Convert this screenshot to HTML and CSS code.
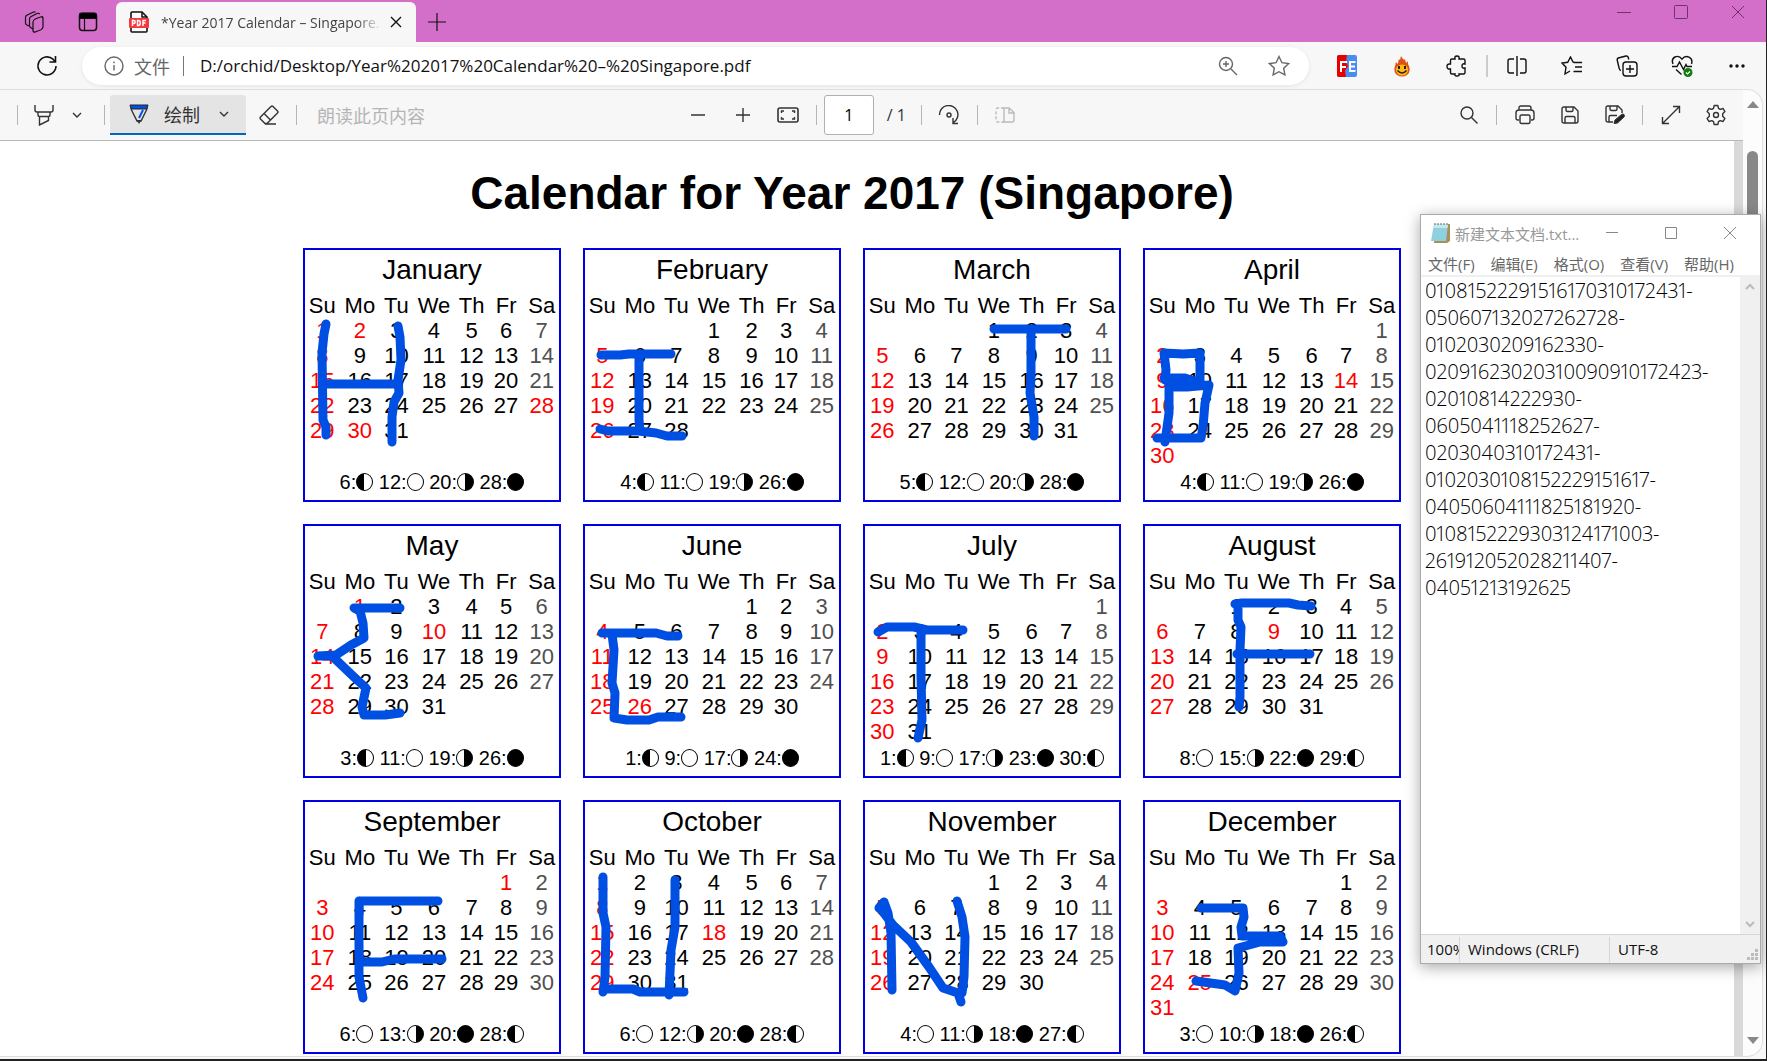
FILE: index.html
```html
<!DOCTYPE html>
<html lang="zh-CN">
<head>
  <meta charset="UTF-8">
  <meta name="viewport" content="width=device-width, initial-scale=1.0">
  <title>Year 2017 Calendar – Singapore</title>
  <link rel="stylesheet" href="styles.css">
</head>
<body>
  <header class="tab-strip">
    <button class="strip-btn" aria-label="Workspaces">
      <svg width="22" height="22" viewBox="0 0 22 22"><rect x="9" y="7" width="10" height="13" rx="2.500" transform="skewY(-20) translate(0 5)"/><path d="M9 18l-2.500-1.500q-1-.7-1-2V8q0-1.500 1.300-2.300L13 2.500q1.500-.7 3 .5M5 15l-2-1q-1.500-.8-1.500-2.300V6.500Q1.500 5 2.800 4.300L9 1.200q1.200-.6 2.500 0"/></svg>
    </button>
    <button class="strip-btn" aria-label="Tab actions">
      <svg width="20" height="20" viewBox="0 0 20 20"><rect x="1.500" y="1.500" width="17" height="17" rx="3" stroke-width="1.500"/><path d="M1.500 3q0-2 2-2h13q2 0 2 2v3.500h-17z" fill="#000"/><path d="M6.500 6v12"/></svg>
    </button>
    <div class="tab">
      <svg class="pdf-icon" width="20" height="22" viewBox="0 0 20 22"><path d="M2 9V2q0-1 1-1h10l5 5v3M2 17v3q0 1 1 1h14q1 0 1-1v-3" fill="#fff" stroke="#111" stroke-width="1.600"/><path d="M13 1v5h5" fill="none" stroke="#111" stroke-width="1.500"/><rect y="7" width="20" height="10" rx="1" fill="#f5393d" stroke="none"/><path d="M3.500 15V9.500h1.300q1.400 0 1.400 1.500t-1.400 1.500H3.500M8.500 9.500v5h.8q2 0 2-2.500t-2-2.500zM14 15V9.500h3M14 12h2.500" fill="none" stroke="#fff" stroke-width="1.400"/></svg>
      <span class="tab-title">*Year 2017 Calendar – Singapore.</span>
      <button class="tab-close" aria-label="Close tab"><svg width="12" height="12" viewBox="0 0 12 12"><path d="M1 1l10 10M11 1L1 11"/></svg></button>
    </div>
    <button class="new-tab" aria-label="New tab"><svg width="18" height="18" viewBox="0 0 18 18"><path d="M9 0v18M0 9h18"/></svg></button>
    <div class="window-controls">
      <button aria-label="Minimize"><svg width="14" height="14" viewBox="0 0 14 14"><path d="M0 7.500h14"/></svg></button>
      <button aria-label="Maximize"><svg width="14" height="14" viewBox="0 0 14 14"><rect x=".5" y=".5" width="13" height="13" rx="1"/></svg></button>
      <button aria-label="Close"><svg width="14" height="14" viewBox="0 0 14 14"><path d="M1 1l12 12M13 1L1 13"/></svg></button>
    </div>
  </header>

  <nav class="nav-bar">
    <button class="refresh" aria-label="Refresh"><svg width="22" height="22" viewBox="0 0 22 22"><path d="M20 11a9 9 0 1 1-3-6.800L19 6.500M19.500 1v6h-6" stroke-width="1.600"/></svg></button>
    <div class="address">
      <svg width="20" height="20" viewBox="0 0 20 20"><circle cx="10" cy="10" r="9"/><path d="M10 9v5.500M10 5.500v1.700"/></svg>
      <label class="scheme" for="url">文件</label>
      <span class="bar"></span>
      <input id="url" type="text" value="D:/orchid/Desktop/Year%202017%20Calendar%20–%20Singapore.pdf">
      <button aria-label="Zoom"><svg width="20" height="20" viewBox="0 0 20 20"><circle cx="8" cy="8" r="6.500"/><path d="M13 13l6 6M8 5v6M5 8h6"/></svg></button>
      <button aria-label="Add to favorites"><svg width="22" height="22" viewBox="0 0 22 22"><path d="M11 1.500l2.900 6.200 6.700.8-4.900 4.700 1.200 6.700-5.900-3.200-5.900 3.200 1.200-6.700L1.400 8.500l6.700-.8z"/></svg></button>
    </div>
    <div class="extensions">
      <button aria-label="FE Helper"><svg width="20" height="22" viewBox="0 0 20 22"><rect width="20" height="22" rx="2" fill="#4a8df0" stroke="none"/><path d="M2 0h8l-1 7 2 4-3 5 1 6H2q-2 0-2-2V2q0-2 2-2z" fill="#e80000" stroke="none"/><path d="M4 17V7h6M4 12h5M18.500 7H13v9h5.500M13 11.500h5" stroke="#fff" stroke-width="2"/></svg></button>
      <button aria-label="Fire"><svg width="18" height="22" viewBox="0 0 18 22"><path d="M8 1q1 2 3 4l1-1 1 4 2-2q-.5 3 1 5 2 6-2 9-5 3-10 0-4-3-2-9 1-2 .5-4L5 9q0-3 1-5l1 1z" fill="#df5018" stroke="none"/><ellipse cx="9" cy="15" rx="6" ry="5.500" fill="#fdb913" stroke="none"/><path d="M6 11v3M12 11v3" stroke="#222" stroke-width="2"/><path d="M4.500 15.500q4.500 5 9 0" stroke="#222" stroke-width="1.500"/></svg></button>
      <button aria-label="Extensions"><svg width="22" height="22" viewBox="0 0 22 22"><path d="M6 4h3q-.8-3 2-3t2 3h4.500Q19 4 19 5.500V9q-3-.8-3 2t3 2v4.500q0 1.500-1.500 1.500H13q.8 2-2 2t-2-2H6q-1.500 0-1.500-1.500V14Q1 14.500 1 11.500T4.500 9V5.500Q4.500 4 6 4z"/></svg></button>
      <span class="nav-divider"></span>
      <button aria-label="Split screen"><svg width="22" height="20" viewBox="0 0 22 20"><path d="M8 3H4Q2 3 2 5v10q0 2 2 2h4M14 3h4q2 0 2 2v10q0 2-2 2h-4M11 0v20"/></svg></button>
      <button aria-label="Favorites"><svg width="22" height="20" viewBox="0 0 22 20"><path d="M13 6.500L12 6 9.500 1 6.700 6.300 1 7l4 4.200L4 18l5-3M13 6.500h8M14 11h7M12.500 15.500H21"/></svg></button>
      <button aria-label="Collections"><svg width="22" height="22" viewBox="0 0 22 22"><path d="M5 15.500q-1.500-.3-1.800-2L1.200 5Q1 3.500 2.300 3L10 1q1.700-.3 2.200 1.300l.6 2.200"/><rect x="7" y="7" width="14" height="14" rx="3"/><path d="M14 10v8M10 14h8"/></svg></button>
      <button aria-label="Browser essentials"><svg width="22" height="22" viewBox="0 0 22 22"><path d="M2 9Q0 4 4 2t7 2.200Q14 .2 18 2.200T20.500 9M1 11.500h5L8.500 7l4 7.500 2.500-5 1 2h5M5 14.500l5.500 5"/><circle cx="17" cy="17.500" r="4.500" fill="#107c10" stroke="none"/><path d="M15 17.500l1.500 1.500 2.500-2.500" stroke="#fff" stroke-width="1.200"/></svg></button>
      <button aria-label="More"><svg width="20" height="4" viewBox="0 0 20 4"><g fill="#111" stroke="none"><circle cx="4" cy="2" r="1.700"/><circle cx="10" cy="2" r="1.700"/><circle cx="16" cy="2" r="1.700"/></g></svg></button>
    </div>
  </nav>

  <main class="viewer">
    <div class="document">
      <div class="toolbar">
        <div class="tools-left">
          <span class="divider"></span>
          <button class="tool" aria-label="Highlight"><svg width="20" height="22" viewBox="0 0 20 22"><path d="M1 1v5q0 2 2 2h14q2 0 2-2V1M4 8v3q0 1.500 1.500 1.500h9Q16 12.500 16 11V8M5.500 12.500V21l9-4.500v-4"/></svg></button>
          <button class="caret" aria-label="Highlight colors"><svg width="10" height="6" viewBox="0 0 10 6"><path d="M1 1l4 4 4-4"/></svg></button>
          <span class="divider draw-divider"></span>
          <button class="draw"><svg width="20" height="20" viewBox="0 0 20 20"><path d="M1 1h18l-1 4H2z" fill="#0050e6" stroke="#222" stroke-width="1"/><path d="M2 5l6 12h4l6-12"/><path d="M7.500 16h5L10 20z" fill="#333" stroke="none"/><path d="M14 6l-4 8" stroke="#0050e6" stroke-width="2"/></svg><span>绘制</span><svg width="10" height="6" viewBox="0 0 10 6"><path d="M1 1l4 4 4-4"/></svg></button>
          <button class="tool" aria-label="Erase"><svg width="20" height="20" viewBox="0 0 20 20"><path d="M1.500 12L12 1.500q1-1 2 0l4.500 4.500q1 1 0 2L8 18.500H6l-4.500-4.500q-1-1 0-2zM5 8.500l6.500 6.500M6 19h11"/></svg></button>
          <span class="divider"></span>
          <button class="read-aloud" disabled>朗读此页内容</button>
        </div>
        <div class="tools-center">
          <button class="tool" aria-label="Zoom out"><svg width="14" height="14" viewBox="0 0 14 14"><path d="M0 7h14"/></svg></button>
          <button class="tool" aria-label="Zoom in"><svg width="14" height="14" viewBox="0 0 14 14"><path d="M0 7h14M7 0v14"/></svg></button>
          <button class="tool" aria-label="Fit to page"><svg width="22" height="16" viewBox="0 0 22 16"><rect x="1" y="1" width="20" height="14" rx="2" stroke-width="1.600"/><path d="M4.500 6V4H7M15 4h2.500v2M17.500 10v2H15M7 12H4.500v-2"/></svg></button>
          <span class="divider"></span>
          <input class="page-number" type="text" value="1" aria-label="Page number">
          <span class="page-count">/ 1</span>
          <span class="divider"></span>
          <button class="tool" aria-label="Rotate"><svg width="22" height="20" viewBox="0 0 22 20"><path d="M1.500 10a9.200 9.200 0 1 1 14 7.500M15 13v5.500h5"/><circle cx="11" cy="10" r="2"/></svg></button>
          <span class="divider"></span>
          <button class="tool faded" aria-label="Page view"><svg width="20" height="16" viewBox="0 0 20 16"><path d="M9 1h5l5 4.500V13q0 2-2 2H9zM14 1v5h5"/><path d="M9 1H3Q1 1 1 3v10q0 2 2 2h6" stroke-dasharray="3 2"/></svg></button>
        </div>
        <div class="tools-right">
          <button class="tool" aria-label="Find"><svg width="18" height="18" viewBox="0 0 18 18"><circle cx="7" cy="7" r="6"/><path d="M11.500 11.500L17.500 17.500"/></svg></button>
          <span class="divider"></span>
          <button class="tool" aria-label="Print"><svg width="20" height="20" viewBox="0 0 20 20"><path d="M4 5V3q0-2 2-2h8q2 0 2 2v2M4 15H3q-2 0-2-2V8q0-3 3-3h12q3 0 3 3v5q0 2-2 2h-1"/><rect x="5" y="10" width="10" height="8.500" rx="1.500"/></svg></button>
          <button class="tool" aria-label="Save"><svg width="18" height="18" viewBox="0 0 18 18"><path d="M3 1h10l4 4v10q0 2-2 2H3q-2 0-2-2V3q0-2 2-2zM5 1v3q0 1.500 1.500 1.500h4Q12 5.500 12 4V1M4 17v-5q0-1.500 1.500-1.500h7Q14 10.500 14 12v5"/></svg></button>
          <button class="tool" aria-label="Save as"><svg width="20" height="20" viewBox="0 0 20 20"><path d="M8 17H3q-2 0-2-2V3q0-2 2-2h10l4 4v3M5 1v3q0 1.500 1.500 1.500h4Q12 5.500 12 4V1M4 17v-5q0-1.500 1.500-1.500H12"/><path d="M9 18.500l1-3.500 6.500-5.500q1.500-1 2.500 0t0 2.500L12.500 18z" fill="#222" stroke-width="1"/></svg></button>
          <span class="divider"></span>
          <button class="tool" aria-label="Full screen"><svg width="20" height="20" viewBox="0 0 20 20"><path d="M12 1.500h6.500V8M18.500 1.500l-17 17M1.500 12v6.500H8"/></svg></button>
          <button class="tool" aria-label="Settings"><svg width="22" height="22" viewBox="0 0 22 22"><path d="M9.200 1.500h3.600l.7 2.900 1.700 1 2.900-.9 1.800 3.100-2.200 2.100v2.600l2.200 2.100-1.800 3.100-2.900-.9-1.700 1-.7 2.900H9.200l-.7-2.900-1.700-1-2.900.9-1.800-3.100 2.200-2.100V9.700L2.100 7.600l1.800-3.100 2.900.9 1.700-1z" stroke-linejoin="round"/><circle cx="11" cy="11" r="2.500"/></svg></button>
        </div>
      </div>

      <section class="page">
        <h1>Calendar for Year 2017 (Singapore)</h1>
        <div class="year">
          <div class="months" id="months"></div>
          <!-- pen strokes drawn over the months -->
          <svg class="ink" viewBox="0 0 1098 806">
            <path d="M23 76L21 86 19 105 20 172 23 179V187M95 78L97 89 98 112 95 132 96 145 91 154 89 169V194M22 136H95"/>
            <path d="M298 107H317L326 106H368M336 108V172L337 183M297 181L305 183H335L353 185 364 188H379"/>
            <path d="M691 81H763M728 82V125L727 145 731 169V188"/>
            <path d="M862 132L863 122 861 105 880 106 897 105V134M861 130H882L897 135M868 139H884L906 137 902 155 900 179 898 190H854M866 134V165L862 194"/>
            <path d="M97 360H51L57 363 60 375 61 390 48 397 33 407 15 408H29L51 429 63 440 59 459 61 467H82L97 465"/>
            <path d="M299 385H353L364 388H375M309 386L311 402 309 435 312 445 311 470 324 472H346L355 469H378"/>
            <path d="M575 384L584 379H611L624 382H660M618 384V429L619 472 615 490"/>
            <path d="M932 356L939 355H986L995 357 1008 358M935 357V372L938 379 937 402V449L936 459M934 406H1007"/>
            <path d="M57 653H135M56 653V729L60 750M59 714H79L91 711H139"/>
            <path d="M300 629V665L303 679 302 729 300 744M302 741H330L337 744H381M372 632V679L368 702 366 747"/>
            <path d="M576 660L581 654 585 665 588 685 589 742M577 660L590 677 608 694 626 719 640 740 655 745 658 754M654 653L659 669 662 689 661 729 659 745"/>
            <path d="M898 660H940L941 669 938 679 939 688H977L980 694H957L935 700 936 725 932 743 922 737 893 733"/>
          </svg>
        </div>
      </section>
    </div>
    <div class="scrollbar">
      <svg width="12" height="7" viewBox="0 0 12 7"><path d="M0 7l6-7 6 7z"/></svg>
      <div class="track"><div class="thumb"></div></div>
      <svg width="12" height="7" viewBox="0 0 12 7"><path d="M0 0l6 7 6-7z"/></svg>
    </div>
  </main>

  <section class="notepad">
    <div class="notepad-title">
      <svg width="22" height="22" viewBox="0 0 22 22"><path d="M5 2h15v17l-3 2H4z" fill="#a98f5a"/><path d="M4 2h14l-2 17H1z" fill="#8fd0de"/><path d="M4 2h14l-.5 4h-14z" fill="#c5e8ef"/><path d="M5 1v2M8 1v2M11 1v2M14 1v2M17 1v2" stroke="#666"/></svg>
      <span>新建文本文档.txt...</span>
      <button aria-label="Minimize"><svg width="12" height="12" viewBox="0 0 12 12"><path d="M0 5.500h12"/></svg></button>
      <button aria-label="Maximize"><svg width="12" height="12" viewBox="0 0 12 12"><path d="M.5.5h11v11H.5z"/></svg></button>
      <button aria-label="Close"><svg width="12" height="12" viewBox="0 0 12 12"><path d="M0 0l12 12M12 0L0 12"/></svg></button>
    </div>
    <div class="notepad-menu">
      <button>文件(F)</button>
      <button>编辑(E)</button>
      <button>格式(O)</button>
      <button>查看(V)</button>
      <button>帮助(H)</button>
    </div>
    <div class="notepad-body">
      <textarea aria-label="Text" spellcheck="false">01081522291516170310172431-
050607132027262728-
0102030209162330-
02091623020310090910172423-
02010814222930-
0605041118252627-
0203040310172431-
0102030108152229151617-
04050604111825181920-
0108152229303124171003-
261912052028211407-
04051213192625</textarea>
      <div class="notepad-scroll">
        <svg width="10" height="8" viewBox="0 0 10 8"><path d="M1 6l4-4 4 4"/></svg>
        <svg width="10" height="8" viewBox="0 0 10 8"><path d="M1 2l4 4 4-4"/></svg>
      </div>
    </div>
    <div class="notepad-status">
      <span class="zoom">100%</span>
      <span class="eol">Windows (CRLF)</span>
      <span class="encoding">UTF-8</span>
      <svg width="12" height="12" viewBox="0 0 12 12"><path d="M8 0h3v3H8zM4 4h3v3H4zM8 4h3v3H8zM0 8h3v3H0zM4 8h3v3H4zM8 8h3v3H8z"/></svg>
    </div>
  </section>
  <script src="script.js"></script>
</body>
</html>
```
FILE: script.js
```js
const weekdays = ['Su', 'Mo', 'Tu', 'We', 'Th', 'Fr', 'Sa'];

// start: weekday of the 1st, moons: [day, phase]
const months = [
  { name: 'January', start: 0, days: 31, holidays: [2, 28, 30], moons: [[6, 'first'], [12, 'full'], [20, 'last'], [28, 'new']] },
  { name: 'February', start: 3, days: 28, holidays: [], moons: [[4, 'first'], [11, 'full'], [19, 'last'], [26, 'new']] },
  { name: 'March', start: 3, days: 31, holidays: [], moons: [[5, 'first'], [12, 'full'], [20, 'last'], [28, 'new']] },
  { name: 'April', start: 6, days: 30, holidays: [14], moons: [[4, 'first'], [11, 'full'], [19, 'last'], [26, 'new']] },
  { name: 'May', start: 1, days: 31, holidays: [1, 10], moons: [[3, 'first'], [11, 'full'], [19, 'last'], [26, 'new']] },
  { name: 'June', start: 4, days: 30, holidays: [26], moons: [[1, 'first'], [9, 'full'], [17, 'last'], [24, 'new']] },
  { name: 'July', start: 6, days: 31, holidays: [], moons: [[1, 'first'], [9, 'full'], [17, 'last'], [23, 'new'], [30, 'first']] },
  { name: 'August', start: 2, days: 31, holidays: [9], moons: [[8, 'full'], [15, 'last'], [22, 'new'], [29, 'first']] },
  { name: 'September', start: 5, days: 30, holidays: [1], moons: [[6, 'full'], [13, 'last'], [20, 'new'], [28, 'first']] },
  { name: 'October', start: 0, days: 31, holidays: [18], moons: [[6, 'full'], [12, 'last'], [20, 'new'], [28, 'first']] },
  { name: 'November', start: 3, days: 30, holidays: [], moons: [[4, 'full'], [11, 'last'], [18, 'new'], [27, 'first']] },
  { name: 'December', start: 5, days: 31, holidays: [25], moons: [[3, 'full'], [10, 'last'], [18, 'new'], [26, 'first']] }
];

function dayCell(month, week, weekday) {
  const day = week * 7 + weekday - month.start + 1;
  if (day < 1 || day > month.days) return '<td></td>';
  let cls = '';
  if (weekday === 0 || month.holidays.includes(day)) cls = 'holiday';
  else if (weekday === 6) cls = 'saturday';
  return `<td class="${cls}">${day}</td>`;
}

function renderMonth(month) {
  const head = weekdays.map(d => `<th>${d}</th>`).join('');
  let rows = '';
  for (let week = 0; week < 6; week++) {
    rows += '<tr>' + weekdays.map((d, i) => dayCell(month, week, i)).join('') + '</tr>';
  }
  const moons = month.moons
    .map(([day, phase]) => `<span>${day}:<i class="moon ${phase}"></i></span>`)
    .join(' ');
  return `<article class="month">
    <table>
      <caption>${month.name}</caption>
      <thead><tr>${head}</tr></thead>
      <tbody>${rows}</tbody>
    </table>
    <p class="moons">${moons}</p>
  </article>`;
}

document.getElementById('months').innerHTML = months.map(renderMonth).join('');
```
FILE: styles.css
```css
* {
  box-sizing: border-box;
}
body {
  margin: 0;
  height: 100vh;
  display: flex;
  flex-direction: column;
  overflow: hidden;
  background-color: #f7f7f7;
  border-right: 1px solid #222;
  border-bottom: 2px solid #222;
  font-family: "Open Sans", "Noto Sans CJK SC", sans-serif;
  color: #111;
}
button {
  border: none;
  background: none;
  padding: 0;
  margin: 0;
  font: inherit;
  color: inherit;
  display: flex;
  align-items: center;
  justify-content: center;
}
svg {
  fill: none;
  stroke: currentColor;
  stroke-width: 1.4;
  flex-shrink: 0;
}

/* tab strip */
.tab-strip {
  height: 42px;
  flex-shrink: 0;
  display: flex;
  align-items: center;
  padding: 2px 0 0 8px;
  background-color: #d36fc8;
}
.strip-btn {
  width: 53px;
  height: 40px;
}
.strip-btn svg, .new-tab svg {
  stroke-width: 1.2;
}
.tab {
  width: 300px;
  height: 40px;
  margin-left: 2px;
  padding: 0 14px 0 13px;
  display: flex;
  align-items: center;
  background-color: #f7f7f7;
  border-radius: 6px 6px 0 0;
}
.tab-title {
  flex: 1;
  margin: 0 8px 0 12px;
  overflow: hidden;
  white-space: nowrap;
  font-size: 14px;
  color: #444;
  -webkit-mask-image: linear-gradient(to right, #000 88%, transparent);
  mask-image: linear-gradient(to right, #000 88%, transparent);
}
.new-tab {
  width: 42px;
  height: 40px;
}
.window-controls {
  margin: -2px 0 0 auto;
  align-self: flex-start;
  display: flex;
  color: #6e3568;
}
.window-controls button {
  width: 57px;
  height: 24px;
}
.window-controls svg {
  stroke-width: 1;
}

/* address row */
.nav-bar {
  height: 47px;
  flex-shrink: 0;
  display: flex;
  align-items: center;
  padding-right: 2px;
}
.refresh {
  width: 82px;
  padding-left: 12px;
}
.address {
  flex: 1;
  height: 38px;
  margin-right: 10px;
  padding: 0 5px 0 22px;
  display: flex;
  align-items: center;
  background-color: #fff;
  border-radius: 19px;
  box-shadow: 0 1px 4px rgba(0, 0, 0, 0.08);
  color: #666;
}
.scheme {
  margin-left: 10px;
  font-size: 18px;
}
.bar {
  width: 1px;
  height: 20px;
  margin: 0 16px 0 13px;
  background-color: #777;
}
.address input {
  flex: 1;
  border: none;
  padding: 0;
  outline: none;
  background: none;
  font: inherit;
  font-size: 17px;
  color: #111;
}
.address button {
  width: 51px;
}
.extensions {
  display: flex;
  align-items: center;
}
.extensions button {
  width: 55px;
  height: 38px;
}
.nav-divider {
  width: 2px;
  height: 22px;
  margin: 0 1px 0 2px;
  background-color: #ccc;
}

/* pdf viewer */
.viewer {
  flex: 1;
  min-height: 0;
  margin: 0 3px 2px 0;
  display: flex;
  overflow: hidden;
  border: 1px solid #dedede;
  border-left: none;
  border-radius: 0 16px 16px 0;
  background-color: #fcfcfc;
}
.document {
  flex: 1;
  min-width: 0;
  display: flex;
  flex-direction: column;
}
.toolbar {
  height: 51px;
  flex-shrink: 0;
  display: flex;
  align-items: center;
  background-color: #f7f7f7;
  border-bottom: 1px solid #b8b8b8;
  color: #333;
}
.tools-left, .tools-center, .tools-right {
  display: flex;
  align-items: center;
}
.tools-left {
  width: 39%;
  margin-right: -4px;
  padding-left: 12px;
}
.tools-right {
  margin-left: auto;
  padding-right: 5px;
}
.tool {
  width: 45px;
  height: 40px;
}
.tools-left .tool:first-of-type {
  width: 42px;
}
.faded {
  color: #bbb;
}
.divider {
  width: 1px;
  height: 20px;
  margin: 0 5px;
  background-color: #b5b5b5;
}
.caret {
  width: 24px;
  height: 40px;
}
.draw-divider {
  margin-left: 15px;
}
.draw {
  width: 136px;
  height: 40px;
  padding-left: 2px;
  background-color: #e4e4e4;
  border-bottom: 2px solid #0067c0;
  border-radius: 3px 3px 0 0;
}
.draw span {
  margin: 0 19px 0 15px;
}
.draw span, .read-aloud {
  font-size: 18px;
}
.read-aloud {
  margin-left: 15px;
  color: #b5b5b5;
}
.page-number {
  width: 50px;
  height: 40px;
  margin-left: 2px;
  padding: 0;
  border: 1px solid #b0b0b0;
  border-radius: 3px;
  background-color: #fff;
  text-align: center;
  font: inherit;
  font-size: 16px;
}
.page-count {
  margin: 0 10px 0 13px;
  font-size: 16px;
}
.page {
  flex: 1;
  min-height: 0;
  overflow: hidden;
  padding: 26px 30px 0 0;
  background-color: #fff;
  border-right: 9px solid #d9d9d9;
  font-family: "Liberation Sans", Arial, sans-serif;
  color: #000;
}
.page h1 {
  margin: 0 0 29px;
  text-align: center;
  font-size: 46px;
  line-height: 52px;
}
.year {
  position: relative;
  max-width: 1098px;
  margin: 0 auto;
}
.months {
  display: grid;
  grid-template-columns: repeat(4, 1fr);
  gap: 22px;
}
.ink {
  position: absolute;
  top: 0;
  left: 0;
  width: 100%;
  height: 100%;
  stroke: #004fe3;
  stroke-width: 9;
  stroke-linecap: round;
  stroke-linejoin: round;
}
.month {
  border: 2px solid #0000e6;
  padding: 2px 0 5px;
}
.month table {
  width: 100%;
  table-layout: fixed;
  border-collapse: collapse;
  font-size: 22px;
  line-height: 25px;
}
.month caption {
  padding-bottom: 5px;
  font-size: 28px;
  line-height: 36px;
}
.month th, .month td {
  width: 34px;
  height: 25px;
  padding: 0;
  text-align: center;
  font-weight: normal;
}
.month th:nth-child(2) {
  width: 40px;
}
.month th:nth-child(3), .month th:nth-child(5) {
  width: 32px;
}
.month th:nth-child(4) {
  width: 42px;
}
.month th:nth-child(6) {
  width: 36px;
}
.month .holiday {
  color: #f00;
}
.month .saturday {
  color: #505050;
}
.moons {
  height: 25px;
  margin: 2px 0 0;
  text-align: center;
  white-space: nowrap;
  font-size: 20px;
  line-height: 24px;
}
.moon {
  display: inline-block;
  width: 17px;
  height: 18px;
  border: 1px solid #000;
  border-radius: 50%;
  vertical-align: -2px;
}
.moon.first {
  background: linear-gradient(to right, #000 50%, #fff 50%);
}
.moon.last {
  background: linear-gradient(to right, #fff 50%, #000 50%);
}
.moon.new {
  background-color: #000;
}
.scrollbar {
  width: 19px;
  padding: 11px 0 12px;
  display: flex;
  flex-direction: column;
  align-items: center;
}
.scrollbar svg {
  fill: #888;
  stroke: none;
}
.track {
  flex: 1;
  padding-top: 43px;
}
.thumb {
  width: 11px;
  height: 30%;
  border-radius: 6px;
  background-color: #888;
}

/* notepad window on top of the browser */
.notepad {
  position: absolute;
  left: 1420px;
  top: 214px;
  width: 341px;
  height: 750px;
  display: flex;
  flex-direction: column;
  background-color: #fff;
  border: 1px solid #aaa;
  box-shadow: 0 3px 14px rgba(0, 0, 0, 0.35);
}
.notepad-title {
  height: 36px;
  display: flex;
  align-items: center;
  padding: 0 1px 0 9px;
  font-size: 15px;
  color: #999;
}
.notepad-title span {
  flex: 1;
  margin-left: 3px;
  white-space: nowrap;
}
.notepad-title svg {
  stroke-width: 1;
  stroke: none;
}
.notepad-title button {
  width: 59px;
  height: 36px;
}
.notepad-title button svg {
  stroke: #888;
}
.notepad-menu {
  height: 26px;
  display: flex;
  gap: 16px;
  padding-left: 7px;
  border-bottom: 2px solid #f0f0f0;
  font-size: 15px;
  color: #666;
}
.notepad-body {
  flex: 1;
  min-height: 0;
  display: flex;
}
.notepad textarea {
  flex: 1;
  min-width: 0;
  border: none;
  outline: none;
  resize: none;
  padding: 0 4px;
  overflow: hidden;
  font-family: "Open Sans", sans-serif;
  font-weight: 300;
  font-size: 20px;
  font-variant-numeric: proportional-nums;
  line-height: 27px;
  color: #000;
}
.notepad-scroll {
  width: 20px;
  padding: 6px 5px;
  display: flex;
  flex-direction: column;
  justify-content: space-between;
  background-color: #f0f0f0;
  color: #bbb;
}
.notepad-scroll svg {
  stroke-width: 2;
}
.notepad-status {
  height: 29px;
  display: flex;
  align-items: center;
  background-color: #f0f0f0;
  border-top: 1px solid #d5d5d5;
  font-size: 15px;
}
.notepad-status span {
  height: 25px;
  line-height: 25px;
  overflow: hidden;
  white-space: nowrap;
}
.zoom {
  width: 39px;
  padding-left: 6px;
  border-right: 1px solid #d5d5d5;
}
.eol {
  width: 150px;
  padding-left: 8px;
  border-right: 1px solid #d5d5d5;
}
.encoding {
  flex: 1;
  padding-left: 8px;
}
.notepad-status svg {
  align-self: flex-end;
  fill: #bbb;
  stroke: none;
  margin: 0 1px 2px 0;
}
```
